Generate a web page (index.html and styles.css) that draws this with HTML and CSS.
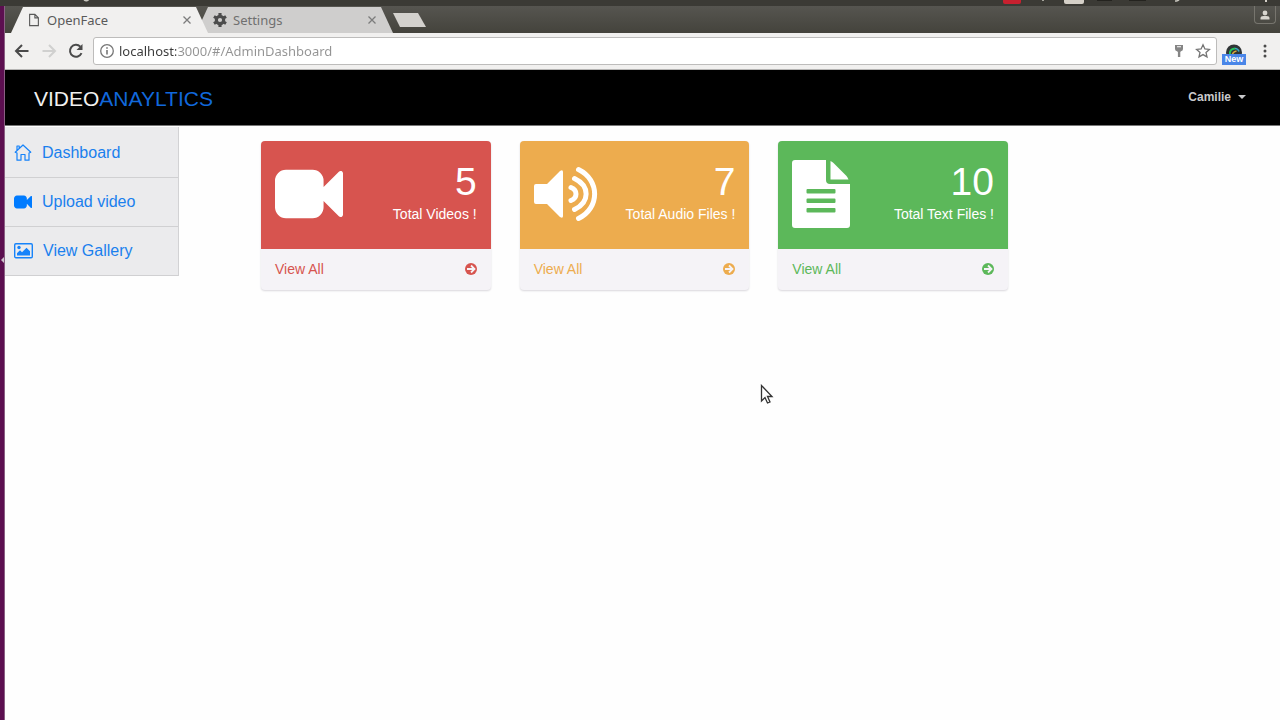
FILE: index.html
```html
<!DOCTYPE html>
<html lang="en">
<head>
<meta charset="utf-8">
<title>OpenFace</title>
<link rel="stylesheet" href="styles.css">
</head>
<body>
<div class="system-bar">
  <svg class="system-art system-art-left" viewBox="0 0 100 6" aria-hidden="true"><path d="M84 0q3 2 5-1" fill="none" stroke="#c9c7bf" stroke-width="1.5"/></svg>
  <svg class="system-art" viewBox="0 0 280 6" aria-hidden="true">
    <path d="M3 0h18v2q0 2-2 2H5q-2 0-2-2z" fill="#c7202f"/>
    <path d="M42 0h2M175 1q4 0 4-2" stroke="#c9c7bf" stroke-width="1.5" fill="none"/>
    <path d="M64 0h20v2q0 2-2 2H66q-2 0-2-2z" fill="#d5d0c8"/>
    <path d="M97 0h15M129 0h17" stroke="#24231f" stroke-width="2"/>
    <path d="M266 0v2" stroke="#d5d0c8" stroke-width="2"/>
  </svg>
</div>
<div class="desktop">
  <div class="launcher"><svg class="launcher-mark" viewBox="0 0 3 6" aria-hidden="true"><path d="M3 0v6L0 3z" fill="#cfc3cd"/></svg></div>
  <div class="window">
    <header class="tab-strip">
      <div class="tab tab-active">
        <svg class="tab-icon" viewBox="0 0 14 16" fill="none" stroke="#5a5a5a" stroke-width="1.3"><path d="M2 1.500h6l4 4v9H2zM8 1.500v4h4"/></svg>
        <span class="tab-title">OpenFace</span>
        <button class="tab-close" aria-label="Close OpenFace"><svg viewBox="0 0 10 10"><path d="M1.500 1.500l7 7M8.500 1.500l-7 7"/></svg></button>
      </div>
      <div class="tab tab-second">
        <svg class="tab-icon" viewBox="0 0 16 16" fill="none" stroke="#4c4c4c"><circle cx="8" cy="8" r="4.200" stroke-width="3.600"/><path d="M8 0v3M8 13v3M1.100 4l2.600 1.500M12.300 10.500l2.600 1.500M1.100 12l2.600-1.500M12.300 5.500L14.900 4" stroke-width="3.600"/></svg>
        <span class="tab-title">Settings</span>
        <button class="tab-close" aria-label="Close Settings"><svg viewBox="0 0 10 10"><path d="M1.500 1.500l7 7M8.500 1.500l-7 7"/></svg></button>
      </div>
      <button class="new-tab" aria-label="New tab"></button>
      <button class="profile" aria-label="Profile"><svg viewBox="0 0 12 12" fill="#d8d6cf"><circle cx="6" cy="4" r="2.400"/><path d="M1.500 10.500V9q0-2 3-2h3q3 0 3 2v1.500z"/></svg></button>
    </header>
    <div class="toolbar">
      <button class="tool" aria-label="Back"><svg viewBox="0 0 16 16" stroke="#4a4a4a"><path d="M14.500 8H2.500M8 2L2 8l6 6"/></svg></button>
      <button class="tool" aria-label="Forward"><svg viewBox="0 0 16 16" stroke="#d0d0cf"><path d="M1.500 8h12M8 2l6 6-6 6"/></svg></button>
      <button class="tool" aria-label="Reload"><svg viewBox="0 0 16 16" stroke="#4a4a4a"><path d="M13.500 10.200A6 6 0 1 1 12.300 3.600"/><path d="M14.500 1v6h-6z" fill="#4a4a4a" stroke="none"/></svg></button>
      <div class="address">
        <svg class="address-icon" viewBox="0 0 16 16" fill="none" stroke="#777"><circle cx="8" cy="8" r="6.300" stroke-width="1.300"/><path d="M8 7v4.500M8 4.200v1.600" stroke-width="1.600"/></svg>
        <input class="address-field" type="text" aria-label="Address" value="localhost:3000/#/AdminDashboard">
        <button class="address-button" aria-label="Saved password"><svg viewBox="0 0 16 16" fill="#858585"><path fill-rule="evenodd" d="M4 2h8v4q0 2-2 2.200L9.300 9v5H6.900V9L6 8.200Q4 8 4 6zM6 3.200v1h4v-1z"/></svg></button>
        <button class="address-button" aria-label="Bookmark"><svg viewBox="0 0 16 16" fill="none" stroke="#747474" stroke-width="1.300"><path d="M8 1.800l1.900 4.100 4.500.5-3.400 3 1 4.500L8 11.600l-4 2.300 1-4.500-3.400-3 4.500-.5z"/></svg></button>
      </div>
      <button class="extension" aria-label="Extension"><svg viewBox="0 0 24 12" aria-hidden="true"><circle cx="12" cy="8.500" r="8" fill="#303536"/><path d="M8 11q-1-6 5-6.500" stroke="#24c55a" stroke-width="2" fill="none"/><path d="M13 4.500q3 0 4 3" stroke="#39a9c4" stroke-width="1.500" fill="none"/><path d="M10.500 11q0-3 4-4" stroke="#d6a83d" stroke-width="1.500" fill="none"/></svg><span class="extension-badge">New</span></button>
      <button class="menu" aria-label="Menu"><svg viewBox="0 0 4 16" fill="#4a4a4a"><circle cx="2" cy="3" r="1.500"/><circle cx="2" cy="8" r="1.500"/><circle cx="2" cy="13" r="1.500"/></svg></button>
    </div>
    <nav class="navbar">
      <a class="brand" href="#">VIDEO<span class="brand-accent">ANAYLTICS</span></a>
      <button class="user">Camilie</button>
    </nav>
    <div class="page">
      <nav class="sidebar">
        <a class="side-link" href="#"><svg class="side-icon" viewBox="0 0 18 18" fill="none" stroke="#1683fa" stroke-width="1.200" stroke-linejoin="round"><path d="M3 16.200V9L1.200 8.200 9 1l7.800 7.200L15 9v7.200h-4V10.500H7v5.700zM3 6.400V2h2.200v2.300"/></svg>Dashboard</a>
        <a class="side-link" href="#"><svg class="side-icon" viewBox="0 0 1792 1792" fill="#007bff"><path d="M1792 352v1088q0 42-39 59-13 5-25 5-27 0-45-19l-403-403v166q0 119-84.500 203.500t-203.500 84.500h-704q-119 0-203.500-84.500t-84.500-203.500v-704q0-119 84.500-203.500t203.500-84.500h704q119 0 203.500 84.500t84.500 203.500v165l403-402q18-19 45-19 12 0 25 5 39 17 39 59z"/></svg>Upload video</a>
        <a class="side-link" href="#"><svg class="side-icon side-icon-wide" viewBox="0 0 19 18" fill="#1683fa"><rect x=".7" y="1.700" width="17.600" height="14" rx="1.200" fill="none" stroke="#1683fa" stroke-width="1.400"/><circle cx="5" cy="5.500" r="1.700"/><path d="M3 13.500v-2.300l3-3 2 2 4.500-4.500 3.500 3.500v4.300z"/></svg>View Gallery</a>
      </nav>
      <main class="cards">
        <section class="card card-red">
          <div class="card-head">
            <svg class="card-icon" viewBox="0 0 1792 1792" fill="#fff"><path d="M1792 352v1088q0 42-39 59-13 5-25 5-27 0-45-19l-403-403v166q0 119-84.500 203.500t-203.500 84.500h-704q-119 0-203.500-84.500t-84.500-203.500v-704q0-119 84.500-203.500t203.500-84.500h704q119 0 203.500 84.500t84.500 203.500v165l403-402q18-19 45-19 12 0 25 5 39 17 39 59z"/></svg>
            <div class="stat"><div class="stat-number">5</div><div class="stat-label">Total Videos !</div></div>
          </div>
          <a class="card-foot" href="#">View All<svg class="arrow" viewBox="0 0 14 14"><circle cx="7" cy="7" r="6" fill="currentColor"/><path d="M3 7h7M7 3.500L10.500 7 7 10.500" fill="none" stroke="#f5f3f7" stroke-width="1.800"/></svg></a>
        </section>
        <section class="card card-orange">
          <div class="card-head">
            <svg class="card-icon" viewBox="0 0 68 68" fill="#fff"><path d="M2 24h11L26 11q3-2 3 1v44q0 3-3 1L13 44H2q-2 0-2-2V26q0-2 2-2z"/><g fill="none" stroke="#fff" stroke-width="5" stroke-linecap="round"><path d="M37 27.500q5 2 5 6.500t-5 6.500"/><path d="M40.500 18.500C56 26 56 42 40.500 49.500"/><path d="M44.500 9.500C66 20 66 48 44.500 58.500"/></g></svg>
            <div class="stat"><div class="stat-number">7</div><div class="stat-label">Total Audio Files !</div></div>
          </div>
          <a class="card-foot" href="#">View All<svg class="arrow" viewBox="0 0 14 14"><circle cx="7" cy="7" r="6" fill="currentColor"/><path d="M3 7h7M7 3.500L10.500 7 7 10.500" fill="none" stroke="#f5f3f7" stroke-width="1.800"/></svg></a>
        </section>
        <section class="card card-green">
          <div class="card-head">
            <svg class="card-icon" viewBox="0 0 68 68" fill="#fff"><path fill-rule="evenodd" d="M3 0h31v20q0 4 4 4h20v41q0 3-3 3H3q-3 0-3-3V3q0-3 3-3zM15.500 29q-1 0-1 1v2.500q0 1 1 1h27q1 0 1-1V30q0-1-1-1zM15.500 38.500q-1 0-1 1V42q0 1 1 1h27q1 0 1-1v-2.500q0-1-1-1zM15.500 48q-1 0-1 1v2.500q0 1 1 1h27q1 0 1-1V49q0-1-1-1z"/><path d="M38.500 1q2 1 3 2l13 13q1 1 2 3.500h-18z"/></svg>
            <div class="stat"><div class="stat-number">10</div><div class="stat-label">Total Text Files !</div></div>
          </div>
          <a class="card-foot" href="#">View All<svg class="arrow" viewBox="0 0 14 14"><circle cx="7" cy="7" r="6" fill="currentColor"/><path d="M3 7h7M7 3.500L10.500 7 7 10.500" fill="none" stroke="#f5f3f7" stroke-width="1.800"/></svg></a>
        </section>
      </main>
    </div>
  </div>
</div>
<svg class="pointer" viewBox="0 0 14 21" aria-hidden="true"><path d="M1.500 1.500v15.500l3.500-3.500 2.500 5.500 2.500-1-2.500-5.500h4.500z" fill="#fff" stroke="#333" stroke-width="1.300"/></svg>
</body>
</html>
```
FILE: styles.css
```css
* { box-sizing: border-box; }
body {
  margin: 0;
  min-height: 100vh;
  display: flex;
  flex-direction: column;
  background: #fefefe;
  font-family: "Liberation Sans", Arial, sans-serif;
}
button {
  margin: 0;
  padding: 0;
  border: 0;
  background: none;
  font: inherit;
}
a { text-decoration: none; }
svg { display: block; flex: none; }

.system-bar {
  display: flex;
  justify-content: space-between;
  height: 6px;
  background: #3b3a35;
}
.system-art { width: 280px; height: 6px; }
.system-art-left { width: 100px; }

.desktop { display: flex; flex: 1; }
.launcher {
  position: relative;
  width: 5px;
  background: #5c0f50;
  border-right: 1px solid #8a5f83;
}
.launcher-mark { position: absolute; left: 1px; top: 251px; width: 3px; height: 6px; }
.window { flex: 1; min-width: 0; display: flex; flex-direction: column; }

.tab-strip {
  display: flex;
  align-items: flex-end;
  height: 27px;
  padding-left: 6px;
  background: linear-gradient(#565550, #44433c);
  font-family: "Noto Sans", "Open Sans", sans-serif;
  font-size: 13px;
}
.tab {
  display: flex;
  align-items: center;
  width: 197px;
  height: 26px;
  padding: 0 16px;
  gap: 6px;
  clip-path: polygon(12px 0, calc(100% - 12px) 0, 100% 100%, 0 100%);
}
.tab-active {
  position: relative;
  z-index: 1;
  background: #f1f0ef;
  color: #5a5a5a;
}
.tab-second { margin-left: -12px; background: #cfcecd; color: #707070; padding-left: 17px; }
.tab-icon { width: 14px; height: 14px; }
.tab-title { flex: 1; }
.tab-close svg { width: 10px; height: 10px; fill: none; stroke: #7c7c7c; stroke-width: 1.300; }
.new-tab {
  width: 33px;
  height: 14px;
  margin-bottom: 6px;
  background: #d3d1cd;
  clip-path: polygon(0 0, 25px 0, 100% 100%, 7px 100%);
}
.profile {
  display: flex;
  align-items: center;
  justify-content: center;
  align-self: flex-start;
  width: 22px;
  height: 18px;
  margin: 0 4px 0 auto;
  border: 1px solid #77756e;
  border-top: 0;
  border-radius: 0 0 4px 4px;
}
.profile svg { width: 12px; height: 12px; }

.toolbar {
  display: flex;
  align-items: center;
  height: 37px;
  padding: 0 13px 0 8px;
  gap: 9px;
  background: #f1f0ef;
  border-bottom: 1px solid #b5b4b3;
}
.tool { padding: 0 1px; }
.tool svg { width: 16px; height: 16px; fill: none; stroke-width: 2; }
.address {
  display: flex;
  align-items: center;
  flex: 1;
  height: 28px;
  margin-left: -1px;
  padding: 0 5px;
  background: #fff;
  border: 1px solid #bdbcbb;
  border-radius: 3px;
}
.address-icon { width: 16px; height: 16px; margin-right: 4px; }
.address-field {
  flex: 1;
  min-width: 0;
  padding: 0;
  border: 0;
  outline: 0;
  font: 13px "Noto Sans", "Open Sans", sans-serif;
  background: linear-gradient(90deg, #3a3a3a 57px, #939393 57px);
  background-clip: text;
  -webkit-background-clip: text;
  color: transparent;
}
.address-button { margin-left: 8px; }
.address-button svg { width: 16px; height: 16px; }
.extension {
  display: flex;
  flex-direction: column;
  align-items: center;
  width: 24px;
  margin: 6px 0 0 -4px;
}
.extension svg { width: 24px; height: 12px; }
.extension-badge {
  width: 24px;
  margin-top: -2px;
  background: #4a86e8;
  color: #fff;
  font-size: 9px;
  font-weight: bold;
  line-height: 11px;
}
.menu { margin-left: 8px; }
.menu svg { width: 4px; height: 16px; }

.navbar {
  display: flex;
  align-items: center;
  justify-content: space-between;
  height: 56px;
  padding: 3px 34px 0 29px;
  background: #000;
  border-bottom: 1px solid #777;
}
.brand { color: #f1f0ef; font-size: 21px; line-height: 28px; }
.brand-accent { color: #1168dc; }
.user {
  display: flex;
  align-items: center;
  gap: 7px;
  color: #c9c9cb;
  font-size: 12px;
  font-weight: bold;
  line-height: 20px;
  margin-bottom: 4px;
}
.user::after {
  content: "";
  border: 4px solid transparent;
  border-top-color: #c9c9cb;
  border-bottom: 0;
}

.page { display: flex; flex: 1; align-items: flex-start; }
.sidebar {
  width: 174px;
  margin-top: 1px;
  padding-top: 1px;
  background: #ebebed;
  border-right: 1px solid #d2d2d4;
}
.side-link {
  display: flex;
  align-items: center;
  height: 49px;
  padding-left: 9px;
  gap: 10px;
  border-bottom: 1px solid #d0d0d2;
  color: #1a80ee;
  font-size: 16px;
}
.side-link:first-child { height: 50px; }
.side-icon { width: 18px; height: 18px; }
.side-icon-wide { width: 19px; }

.cards {
  flex: 1;
  display: grid;
  grid-template-columns: repeat(3, minmax(0, 1fr));
  gap: 29px;
  max-width: 747px;
  margin: 15px 20px 0 82px;
}
.card {
  overflow: hidden;
  border-radius: 4px;
  background: #f5f3f7;
  box-shadow: 0 1px 2px #d9d7dc;
}
.card-red { --tone: #d7544f; }
.card-orange { --tone: #edac4e; }
.card-green { --tone: #5cb85a; }
.card-head {
  display: flex;
  justify-content: space-between;
  height: 108px;
  padding: 19px 14px;
  background: var(--tone);
  color: #fff;
}
.card-icon { width: 68px; height: 68px; margin-right: -20px; }
.stat { text-align: right; white-space: nowrap; }
.stat-number { font-size: 39px; line-height: 44px; }
.stat-label { font-size: 14px; line-height: 20px; }
.card-foot {
  display: flex;
  align-items: center;
  justify-content: space-between;
  height: 41px;
  padding: 0 13px 1px 14px;
  color: var(--tone);
  font-size: 14px;
}
.arrow { width: 14px; height: 14px; }

.pointer { position: absolute; left: 760px; top: 384px; width: 14px; height: 21px; }
```
